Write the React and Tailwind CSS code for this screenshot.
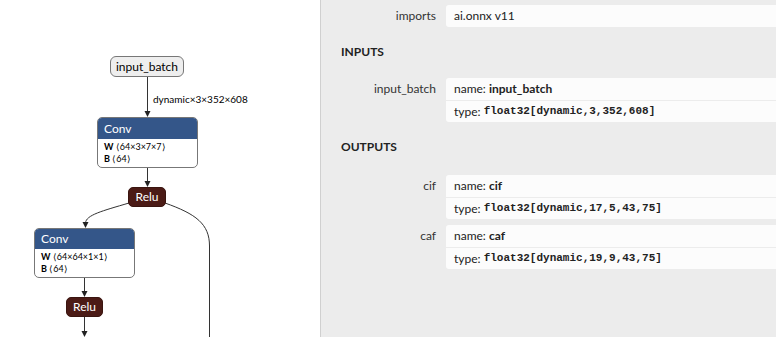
const sans = { fontFamily: "Lato, 'Open Sans', sans-serif" };

function Arrow({ x, y }) {
  return <path d={`M${x - 3} ${y - 6} L${x + 3} ${y - 6} L${x} ${y} Z`} fill="#222" />;
}

function Graph() {
  return (
    <div className="relative w-[320px] h-[337px] shrink-0 bg-white overflow-hidden" style={sans}>
      <svg className="absolute inset-0" width="320" height="337">
        <g fill="none" stroke="#333" strokeWidth="1">
          <path d="M147.5 77 L147.5 112" />
          <path d="M147.5 168 L147.5 182" />
          <path d="M129 203 C102 211 86 215 85.5 223" />
          <path d="M165 203 C196 214 209.5 224 209.5 246 L209.5 337" />
          <path d="M84.5 278 L84.5 292" />
          <path d="M84.5 317 L84.5 332" />
        </g>
        <Arrow x={147.5} y={117} />
        <Arrow x={147.5} y={187} />
        <Arrow x={85.5} y={228} />
        <Arrow x={84.5} y={297} />
        <Arrow x={84.5} y={337} />
      </svg>

      <div className="absolute left-[110px] top-[56px] w-[74px] h-[21px] rounded-[6px] border border-[#777] bg-[#eeeeee] flex items-center justify-center text-[12px] text-black">
        input_batch
      </div>
      <div className="absolute left-[153px] top-[92px] text-[10px] leading-[14px] text-black">
        dynamic×3×352×608
      </div>

      <div className="absolute left-[97px] top-[117px] w-[101px] h-[51px] rounded-[5px] border border-[#777] bg-white overflow-hidden">
        <div className="h-[21px] bg-[#345689] text-white text-[12px] leading-[21px] pl-[6px]">Conv</div>
        <div className="pl-[6px] pt-[2px] text-[9px] leading-[12px] text-black">
          <div><span className="font-bold">W</span> ⟨64×3×7×7⟩</div>
          <div><span className="font-bold">B</span> ⟨64⟩</div>
        </div>
      </div>

      <div className="absolute left-[128px] top-[187px] w-[38px] h-[20px] rounded-[5px] bg-[#4b1b16] border border-[#3a1510] flex items-center justify-center text-white text-[12px]">
        Relu
      </div>

      <div className="absolute left-[34px] top-[228px] w-[101px] h-[50px] rounded-[5px] border border-[#777] bg-white overflow-hidden">
        <div className="h-[20px] bg-[#345689] text-white text-[12px] leading-[20px] pl-[6px]">Conv</div>
        <div className="pl-[6px] pt-[2px] text-[9px] leading-[12px] text-black">
          <div><span className="font-bold">W</span> ⟨64×64×1×1⟩</div>
          <div><span className="font-bold">B</span> ⟨64⟩</div>
        </div>
      </div>

      <div className="absolute left-[66px] top-[297px] w-[37px] h-[20px] rounded-[5px] bg-[#4b1b16] border border-[#3a1510] flex items-center justify-center text-white text-[12px]">
        Relu
      </div>
    </div>
  );
}

const mono = { fontFamily: "'Liberation Mono', 'DejaVu Sans Mono', monospace" };

function Row({ label, children, className = "" }) {
  return (
    <div className={`flex ${className}`}>
      <div className="w-[125px] shrink-0 text-right pr-[10px] pt-[3px] text-[#333] text-[12px] leading-[16px]">{label}</div>
      <div className="flex-1 bg-[#fcfcfc] rounded-l-[3px]">{children}</div>
    </div>
  );
}

function Line({ children, first }) {
  return (
    <div className={`h-[22px] flex items-center pl-[8px] text-[12px] text-[#222] ${first ? "" : "border-t border-[#ececec]"}`}>
      {children}
    </div>
  );
}

function Arg({ label, name, type, className }) {
  return (
    <Row label={label} className={className}>
      <Line first>
        name:&nbsp;<span className="font-bold">{name}</span>
      </Line>
      <Line>
        type:&nbsp;<span className="font-bold text-[11px]" style={mono}>{type}</span>
      </Line>
    </Row>
  );
}

export default function App() {
  return (
    <div className="flex w-[776px] h-[337px] overflow-hidden">
      <Graph />
      <div className="flex-1 h-full bg-[#ececec] border-l border-[#d0d0d0] pt-[5px]" style={sans}>
        <Row label="imports">
          <Line first>ai.onnx v11</Line>
        </Row>
        <div className="mt-[16px] pl-[20px] h-[18px] leading-[18px] text-[12px] font-bold text-[#222]">INPUTS</div>
        <Arg className="mt-[17px]" label="input_batch" name="input_batch" type="float32[dynamic,3,352,608]" />
        <div className="mt-[16px] pl-[20px] h-[18px] leading-[18px] text-[12px] font-bold text-[#222]">OUTPUTS</div>
        <Arg className="mt-[19px]" label="cif" name="cif" type="float32[dynamic,17,5,43,75]" />
        <Arg className="mt-[6px]" label="caf" name="caf" type="float32[dynamic,19,9,43,75]" />
      </div>
    </div>
  );
}
